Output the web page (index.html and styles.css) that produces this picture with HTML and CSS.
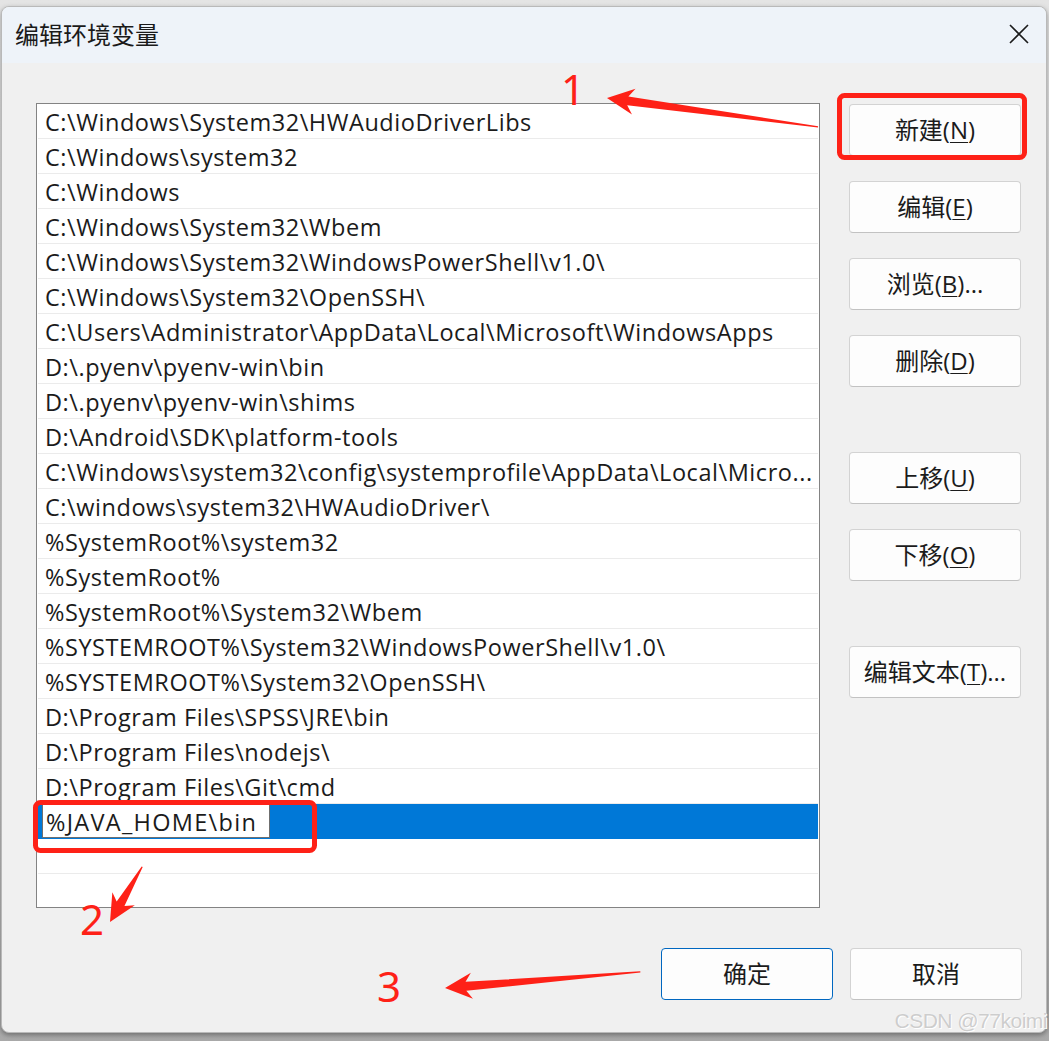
FILE: index.html
```html
<!DOCTYPE html>
<html lang="zh-CN">
<head>
    <meta charset="UTF-8">
    <meta name="viewport" content="width=device-width, initial-scale=1.0">
    <title>编辑环境变量</title>
    <link rel="stylesheet" href="styles.css">
</head>
<body>
    <div class="desk">
        <div class="dialog">
            <div class="titlebar">
                <span class="title">编辑环境变量</span>
                <button class="close" aria-label="关闭">
                    <svg width="20" height="20" viewBox="0 0 20 20">
                        <path d="M1 1 L19 19 M19 1 L1 19" stroke="#1b1b1b" stroke-width="1.6" fill="none"/>
                    </svg>
                </button>
            </div>

            <div class="content">
                <div class="path-list">
                    <div class="row">C:\Windows\System32\HWAudioDriverLibs</div>
                    <div class="row">C:\Windows\system32</div>
                    <div class="row">C:\Windows</div>
                    <div class="row">C:\Windows\System32\Wbem</div>
                    <div class="row">C:\Windows\System32\WindowsPowerShell\v1.0\</div>
                    <div class="row">C:\Windows\System32\OpenSSH\</div>
                    <div class="row">C:\Users\Administrator\AppData\Local\Microsoft\WindowsApps</div>
                    <div class="row">D:\.pyenv\pyenv-win\bin</div>
                    <div class="row">D:\.pyenv\pyenv-win\shims</div>
                    <div class="row">D:\Android\SDK\platform-tools</div>
                    <div class="row">C:\Windows\system32\config\systemprofile\AppData\Local\Micro...</div>
                    <div class="row">C:\windows\system32\HWAudioDriver\</div>
                    <div class="row">%SystemRoot%\system32</div>
                    <div class="row">%SystemRoot%</div>
                    <div class="row">%SystemRoot%\System32\Wbem</div>
                    <div class="row">%SYSTEMROOT%\System32\WindowsPowerShell\v1.0\</div>
                    <div class="row">%SYSTEMROOT%\System32\OpenSSH\</div>
                    <div class="row">D:\Program Files\SPSS\JRE\bin</div>
                    <div class="row">D:\Program Files\nodejs\</div>
                    <div class="row">D:\Program Files\Git\cmd</div>
                    <div class="row selected"><span class="edit-box">%JAVA_HOME\bin</span></div>
                    <div class="row"></div>
                </div>

                <div class="side-buttons">
                    <div class="btn-group">
                        <button class="btn">新建(<u>N</u>)</button>
                        <button class="btn">编辑(<u>E</u>)</button>
                        <button class="btn">浏览(<u>B</u>)...</button>
                        <button class="btn">删除(<u>D</u>)</button>
                    </div>
                    <div class="btn-group">
                        <button class="btn">上移(<u>U</u>)</button>
                        <button class="btn">下移(<u>O</u>)</button>
                    </div>
                    <div class="btn-group">
                        <button class="btn">编辑文本(<u>T</u>)...</button>
                    </div>
                </div>
            </div>

            <div class="footer">
                <button class="btn default">确定</button>
                <button class="btn">取消</button>
            </div>
        </div>

        <!-- red annotations drawn over the screenshot -->
        <svg class="marks" width="1049" height="1041" viewBox="0 0 1049 1041">
            <rect x="839.5" y="95.5" width="185" height="62" rx="5" class="mark-box"/>
            <rect x="35.5" y="802.5" width="279" height="48" rx="5" class="mark-box"/>

            <polygon class="mark-fill" transform="translate(607 98) rotate(7.8)" points="0,0 27,-13 21,-4.5 213,-0.6 213,0.6 21,4.5 27,13"/>
            <polygon class="mark-fill" transform="translate(110 922) rotate(-59.8)" points="0,0 27,-13 21,-4.5 64,-0.6 64,0.6 21,4.5 27,13"/>
            <polygon class="mark-fill" transform="translate(445 988) rotate(-4.7)" points="0,0 27,-13 21,-4.5 196,-0.6 196,0.6 21,4.5 27,13"/>

            <text x="561" y="105" class="mark-num">1</text>
            <text x="80" y="935" class="mark-num">2</text>
            <text x="377" y="1002" class="mark-num">3</text>
        </svg>

        <div class="watermark">CSDN @77koimi</div>
    </div>
</body>
</html>
```

FILE: styles.css
```css
/* General Styles */
html, body {
    margin: 0;
    padding: 0;
}

body {
    background: linear-gradient(#e4e4e4, #cfcfcf 60%, #a9a9a9);
    font-family: "Open Sans", "Noto Sans CJK SC", sans-serif;
    color: #1b1b1b;
}

.desk {
    position: relative;
    width: 1049px;
    height: 1041px;
    overflow: hidden;
    padding: 6px 0 0 1px;
    box-sizing: border-box;
}

.dialog {
    width: 1046px;
    height: 1027px;
    background-color: #f0f0f0;
    border: 1px solid #b9b9b9;
    border-radius: 8px;
    box-sizing: border-box;
    overflow: hidden;
    display: flex;
    flex-direction: column;
    box-shadow: 0 2px 5px rgba(0, 0, 0, 0.35);
}

/* Title bar */
.titlebar {
    height: 56px;
    background-color: #eef3f9;
    display: flex;
    align-items: center;
    justify-content: space-between;
    padding: 0 17px 0 13px;
    flex-shrink: 0;
}

.title {
    font-family: "Noto Sans CJK SC", sans-serif;
    font-size: 24px;
    color: #1a1a1a;
    margin-top: -3px;
}

.close {
    background: none;
    border: none;
    padding: 0;
    width: 20px;
    height: 20px;
    margin-top: -3px;
}

/* Path list */
.content {
    display: flex;
    gap: 29px;
    padding: 40px 0 0 34px;
}

.path-list {
    width: 784px;
    height: 805px;
    background-color: #fff;
    border: 1px solid #838383;
    box-sizing: border-box;
    overflow: hidden;
}

.row {
    height: 35px;
    line-height: 37px;
    margin: 0 1px;
    padding-left: 7px;
    border-bottom: 1px solid #ebebeb;
    box-sizing: border-box;
    font-size: 23.5px;
    letter-spacing: 0.55px;
    white-space: nowrap;
    overflow: hidden;
}

.row.selected {
    background-color: #0078d7;
    border-bottom-color: #0078d7;
    padding-left: 4px;
}

.edit-box {
    display: inline-block;
    width: 228px;
    height: 34px;
    line-height: 35px;
    background-color: #fff;
    border: 1px solid #6f6f6f;
    box-sizing: border-box;
    padding-left: 3px;
    letter-spacing: 1.3px;
    vertical-align: top;
}

/* Buttons */
.side-buttons {
    display: flex;
    flex-direction: column;
    gap: 65px;
    padding-top: 1px;
}

.btn-group {
    display: flex;
    flex-direction: column;
    gap: 25px;
}

.btn {
    width: 172px;
    height: 52px;
    background-color: #fdfdfd;
    border: 1px solid #d3d3d3;
    border-bottom-color: #c2c2c2;
    border-radius: 4px;
    font-family: "Open Sans", "Noto Sans CJK SC", sans-serif;
    font-size: 24px;
    color: #1b1b1b;
    padding: 0 0 3px;
}

.btn u {
    text-underline-offset: 3px;
    text-decoration-thickness: 1px;
}

.btn.default {
    border-color: #0067c0;
}

.footer {
    display: flex;
    justify-content: flex-end;
    gap: 17px;
    padding: 40px 24px 0 0;
}

/* Annotations */
.marks {
    position: absolute;
    top: 0;
    left: 0;
    pointer-events: none;
}

.mark-box {
    fill: none;
    stroke: #fe2117;
    stroke-width: 5;
}

.mark-fill {
    fill: #fe2117;
}

.mark-num {
    fill: #fe2117;
    font-family: "Noto Sans", sans-serif;
    font-size: 42px;
}

.watermark {
    position: absolute;
    right: 2px;
    bottom: 8px;
    font-family: "Liberation Sans", sans-serif;
    font-size: 21px;
    color: #cdcdcd;
    text-shadow: 0 0 1px #fff, 1px 1px 0 #fff;
    letter-spacing: -0.5px;
}
```
